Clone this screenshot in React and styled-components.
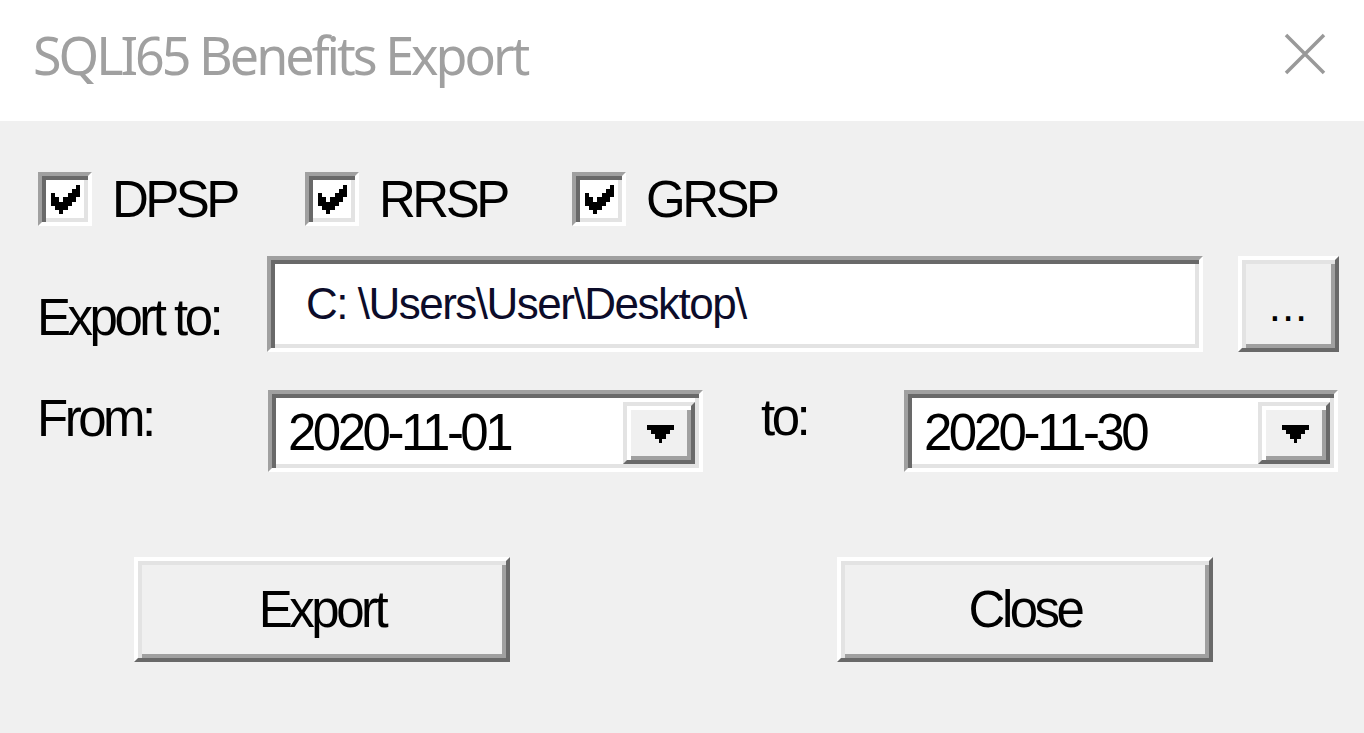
import React from "react";
import styled, { createGlobalStyle } from "styled-components";

const GlobalStyle = createGlobalStyle`
  html, body {
    margin: 0;
    padding: 0;
    background: #f0f0f0;
  }
  body {
    width: 1364px;
    height: 733px;
    overflow: hidden;
    font-family: "Liberation Sans", Arial, sans-serif;
  }
`;

const Window = styled.div`
  width: 1364px;
  height: 733px;
  background: #f0f0f0;
  display: flex;
  flex-direction: column;
`;

const TitleBar = styled.div`
  height: 121px;
  background: #ffffff;
  display: flex;
  justify-content: space-between;
  align-items: flex-start;
  padding: 0 38px 0 33px;
  box-sizing: border-box;
`;

const TitleText = styled.span`
  margin-top: 29px;
  font-family: "Noto Sans", "Open Sans", sans-serif;
  font-size: 52px;
  line-height: 1;
  letter-spacing: -3px;
  color: #a0a0a0;
`;

const CloseIcon = styled.svg`
  margin-top: 33px;
  width: 42px;
  height: 42px;
`;

const Body = styled.div`
  display: flex;
  flex-direction: column;
  padding: 51px 0 0 37px;
`;

const Row = styled.div`
  display: flex;
  align-items: flex-start;
  height: ${(p) => p.$height}px;
  margin-bottom: ${(p) => p.$gap || 0}px;
`;

const Text = styled.span`
  font-size: 51px;
  line-height: 1;
  letter-spacing: -3.5px;
  color: #000;
  white-space: nowrap;
`;

const CheckItem = styled.label`
  display: flex;
  align-items: center;
  width: 267px;
  height: 54px;
  gap: 20px;
  &:first-child {
    margin-left: 1px;
  }
`;

const Sunken = styled.div`
  box-sizing: border-box;
  border-style: solid;
  border-width: 4px;
  border-color: #a0a0a0 #ffffff #ffffff #a0a0a0;
  box-shadow: inset 4px 4px 0 #696969, inset -4px -4px 0 #e3e3e3;
  background: #ffffff;
`;

const CheckBox = styled(Sunken)`
  width: 54px;
  height: 54px;
  display: flex;
  align-items: center;
  justify-content: center;
  flex-shrink: 0;
  svg {
    width: 29px;
    height: 29px;
    margin: 1px 0 0 1px;
  }
`;

const Label = styled(Text)`
  width: ${(p) => p.$width}px;
  padding-top: ${(p) => p.$top}px;
  padding-left: ${(p) => p.$left || 0}px;
  box-sizing: border-box;
  flex-shrink: 0;
`;

const Field = styled(Sunken)`
  width: ${(p) => p.$width}px;
  height: ${(p) => p.$height}px;
  display: flex;
  align-items: center;
  padding: 4px 4px 4px ${(p) => p.$pad}px;
`;

const PathText = styled.span`
  font-size: 44px;
  line-height: 1;
  letter-spacing: -1.5px;
  color: #0c0c2a;
  white-space: nowrap;
`;

const Raised = styled.button`
  box-sizing: border-box;
  border-style: solid;
  border-width: 4px;
  border-color: #ffffff #696969 #696969 #ffffff;
  box-shadow: inset 4px 4px 0 #e3e3e3, inset -4px -4px 0 #a0a0a0;
  background: #f0f0f0;
  padding: 0;
  display: flex;
  align-items: center;
  justify-content: center;
  font-family: "Liberation Sans", Arial, sans-serif;
  color: #000;
  cursor: default;
`;

const BrowseButton = styled(Raised)`
  width: 101px;
  height: 96px;
  margin-left: 35px;
  font-size: 44px;
  line-height: 1;
  letter-spacing: 1px;
  padding-top: 4px;
`;

const Combo = styled(Sunken)`
  width: ${(p) => p.$width}px;
  height: 82px;
  display: flex;
  align-items: stretch;
  padding: 4px;
`;

const ComboValue = styled(Text)`
  flex: 1;
  display: flex;
  align-items: center;
  padding: 2px 0 0 12px;
`;

const DropButton = styled.div`
  box-sizing: border-box;
  width: 72px;
  margin-top: 4px;
  border-style: solid;
  border-width: 4px;
  border-color: #e3e3e3 #696969 #696969 #e3e3e3;
  box-shadow: inset 4px 4px 0 #ffffff, inset -4px -4px 0 #a0a0a0;
  background: #f0f0f0;
  display: flex;
  align-items: center;
  justify-content: center;
  svg {
    width: 27px;
    height: 18px;
    margin: 2px 0 0 2px;
  }
`;

const PushButton = styled(Raised)`
  width: 376px;
  height: 105px;
  font-size: 51px;
  letter-spacing: -3.5px;
  line-height: 1;
  margin-left: ${(p) => p.$left}px;
`;

const Check = () => (
  <svg viewBox="0 0 7 7" shapeRendering="crispEdges">
    <path
      fill="#000"
      d="M6 0h1v3h-1z M5 1h1v3h-1z M4 2h1v3h-1z M3 3h1v3h-1z M2 4h1v3h-1z M1 3h1v3h-1z M0 2h1v3h-1z"
    />
  </svg>
);

const Arrow = () => (
  <svg viewBox="0 0 7 4" preserveAspectRatio="none" shapeRendering="crispEdges">
    <path fill="#000" d="M0 0h7v1h-7z M1 1h5v1h-5z M2 2h3v1h-3z M3 3h1v1h-1z" />
  </svg>
);

const DateCombo = ({ value, width }) => (
  <Combo $width={width}>
    <ComboValue>{value}</ComboValue>
    <DropButton>
      <Arrow />
    </DropButton>
  </Combo>
);

const plans = ["DPSP", "RRSP", "GRSP"];

export default function App() {
  return (
    <>
      <GlobalStyle />
      <Window>
        <TitleBar>
          <TitleText>SQLI65 Benefits Export</TitleText>
          <CloseIcon viewBox="0 0 42 42">
            <path d="M2 2L40 40M40 2L2 40" stroke="#999999" strokeWidth="3.5" />
          </CloseIcon>
        </TitleBar>
        <Body>
          <Row $height={54} $gap={30}>
            {plans.map((p) => (
              <CheckItem key={p}>
                <CheckBox>
                  <Check />
                </CheckBox>
                <Text>{p}</Text>
              </CheckItem>
            ))}
          </Row>
          <Row $height={96} $gap={38}>
            <Label $width={230} $top={36}>Export to:</Label>
            <Field $width={936} $height={96} $pad={35}>
              <PathText>C: \Users\User\Desktop\</PathText>
            </Field>
            <BrowseButton>...</BrowseButton>
          </Row>
          <Row $height={82} $gap={85}>
            <Label $width={231} $top={3}>From:</Label>
            <DateCombo value="2020-11-01" width={435} />
            <Label $width={201} $top={2} $left={58}>to:</Label>
            <DateCombo value="2020-11-30" width={434} />
          </Row>
          <Row $height={105}>
            <PushButton $left={97}>Export</PushButton>
            <PushButton $left={327}>Close</PushButton>
          </Row>
        </Body>
      </Window>
    </>
  );
}
